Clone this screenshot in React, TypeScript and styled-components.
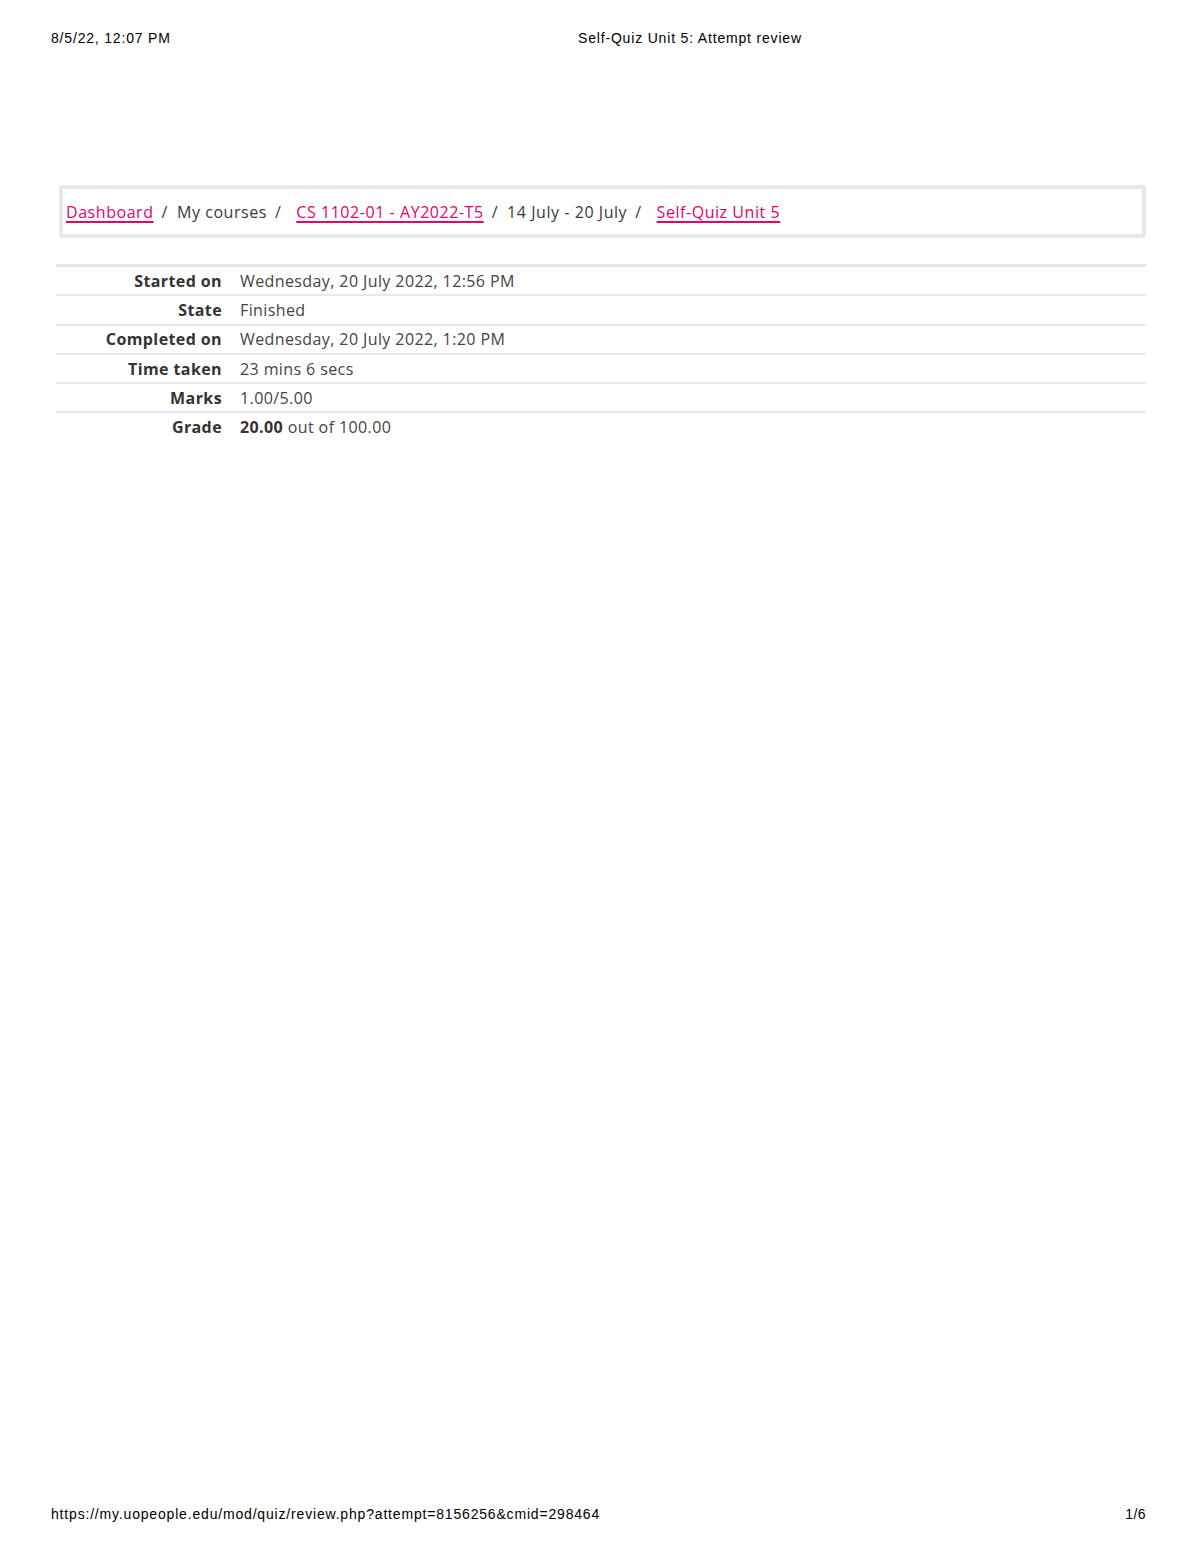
import React from "react";
import styled, { createGlobalStyle } from "styled-components";

const Global = createGlobalStyle`
  html, body { margin: 0; padding: 0; background: #fff; }
  body { font-family: "Liberation Sans", Arial, sans-serif; }
`;

const Page = styled.div`
  width: 1200px;
  height: 1553px;
  display: flex;
  flex-direction: column;
  box-sizing: border-box;
`;

const PrintBar = styled.div<{ top?: boolean }>`
  display: grid;
  grid-template-columns: 527px auto 1fr;
  align-items: center;
  padding: 0 54px 0 51px;
  height: 16px;
  font-family: "Liberation Sans", Arial, sans-serif;
  font-size: 14px;
  letter-spacing: 0.82px;
  color: #000;
  margin-top: ${(p) => (p.top ? "30px" : "0")};
`;

const BarRight = styled.span`
  text-align: right;
  letter-spacing: 0.4px;
`;

const Footer = styled(PrintBar)`
  margin-top: auto;
  margin-bottom: 31px;
  grid-template-columns: 1fr auto;
`;

const Content = styled.main`
  margin: 139px 54px 0 56px;
  font-family: "Open Sans", "Noto Sans", sans-serif;
  color: #333;
`;

const Crumbs = styled.nav`
  margin-left: 3px;
  border: 4px solid #e6e8ee;
  border-radius: 3px;
  height: 53px;
  box-sizing: border-box;
  display: flex;
  align-items: center;
  padding: 0 4px 0 3px;
  font-size: 16px;
  letter-spacing: 0.55px;
  color: #373a3c;
  white-space: pre;
`;

const CrumbLink = styled.a`
  color: #e8006a;
  text-decoration: underline;
  text-decoration-thickness: 2px;
  text-underline-offset: 3px;
  cursor: pointer;
`;

const CrumbText = styled.span`
  color: #373a3c;
`;

const Sep = styled.span<{ wide?: boolean }>`
  color: #373a3c;
  margin: 0 ${(p) => (p.wide ? "15px" : "9px")} 0 8px;
`;

const Summary = styled.table`
  margin-top: 26px;
  width: 100%;
  border-collapse: collapse;
  border-top: 3px solid #e6e8ee;
  font-size: 16px;
  letter-spacing: 0.4px;
`;

const Row = styled.tr<{ last?: boolean }>`
  border-bottom: ${(p) => (p.last ? "none" : "2px solid #e6e8ee")};
`;

const Label = styled.th`
  width: 166px;
  text-align: right;
  padding: 0 17px 0 0;
  height: 27.3px;
  font-weight: 700;
  color: #333;
  white-space: nowrap;
`;

const Value = styled.td`
  padding: 0 0 0 1px;
  height: 27.3px;
  color: #444;
  white-space: nowrap;
`;

const Strong = styled.b`
  color: #333;
`;

const rows: [string, React.ReactNode][] = [
  ["Started on", "Wednesday, 20 July 2022, 12:56 PM"],
  ["State", "Finished"],
  ["Completed on", "Wednesday, 20 July 2022, 1:20 PM"],
  ["Time taken", "23 mins 6 secs"],
  ["Marks", "1.00/5.00"],
  [
    "Grade",
    <>
      <Strong>20.00</Strong> out of 100.00
    </>,
  ],
];

export default function App() {
  return (
    <Page>
      <Global />
      <PrintBar top>
        <span>8/5/22, 12:07 PM</span>
        <span>Self-Quiz Unit 5: Attempt review</span>
        <BarRight />
      </PrintBar>
      <Content>
        <Crumbs>
          <CrumbLink>Dashboard</CrumbLink>
          <Sep>/</Sep>
          <CrumbText>My courses</CrumbText>
          <Sep wide>/</Sep>
          <CrumbLink>CS 1102-01 - AY2022-T5</CrumbLink>
          <Sep>/</Sep>
          <CrumbText>14 July - 20 July</CrumbText>
          <Sep wide>/</Sep>
          <CrumbLink>Self-Quiz Unit 5</CrumbLink>
        </Crumbs>
        <Summary>
          <tbody>
            {rows.map(([k, v], i) => (
              <Row key={k} last={i === rows.length - 1}>
                <Label>{k}</Label>
                <Value>{v}</Value>
              </Row>
            ))}
          </tbody>
        </Summary>
      </Content>
      <Footer>
        <span>https://my.uopeople.edu/mod/quiz/review.php?attempt=8156256&cmid=298464</span>
        <BarRight>1/6</BarRight>
      </Footer>
    </Page>
  );
}
